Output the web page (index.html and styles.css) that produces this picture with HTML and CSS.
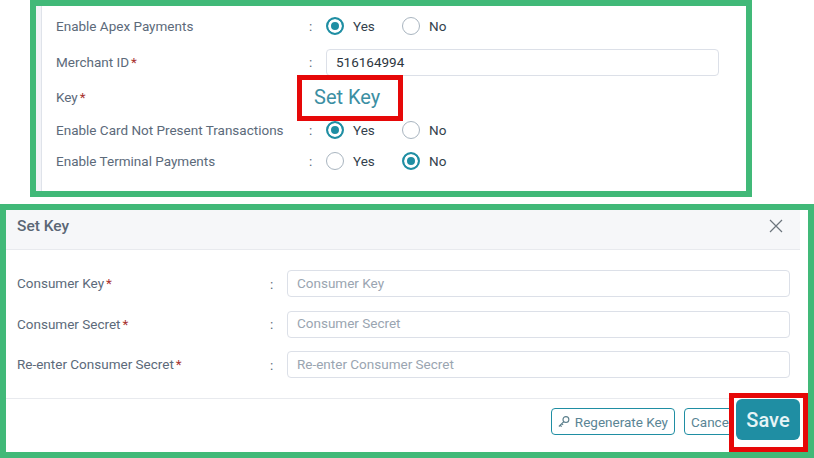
FILE: index.html
```html
<!DOCTYPE html>
<html lang="en">
<head>
    <meta charset="UTF-8">
    <title>Apex Payments Settings</title>
    <link rel="stylesheet" href="styles.css">
</head>
<body>
    <section class="settings-panel">
        <div class="settings-inner">
            <div class="row row-apex">
                <div class="row-label">Enable Apex Payments</div>
                <div class="row-colon">:</div>
                <div class="radio-group">
                    <span class="radio checked"></span><span class="radio-text">Yes</span>
                    <span class="radio"></span><span class="radio-text">No</span>
                </div>
            </div>
            <div class="row row-merchant">
                <div class="row-label">Merchant ID<span class="req">*</span></div>
                <div class="row-colon">:</div>
                <input class="text-input merchant-input" type="text" value="516164994">
            </div>
            <div class="row row-key">
                <div class="row-label">Key<span class="req">*</span></div>
            </div>
            <div class="row row-card">
                <div class="row-label">Enable Card Not Present Transactions</div>
                <div class="row-colon">:</div>
                <div class="radio-group">
                    <span class="radio checked"></span><span class="radio-text">Yes</span>
                    <span class="radio"></span><span class="radio-text">No</span>
                </div>
            </div>
            <div class="row row-terminal">
                <div class="row-label">Enable Terminal Payments</div>
                <div class="row-colon">:</div>
                <div class="radio-group">
                    <span class="radio"></span><span class="radio-text">Yes</span>
                    <span class="radio checked"></span><span class="radio-text">No</span>
                </div>
            </div>
        </div>
        <div class="callout callout-key"><a class="set-key-link">Set Key</a></div>
    </section>

    <section class="modal-panel">
        <div class="modal-header">
            <h2>Set Key</h2>
            <svg class="close-icon" width="14" height="14" viewBox="0 0 14 14">
                <path d="M1 1 L13 13 M13 1 L1 13" stroke="#6c757d" stroke-width="1.2" fill="none"/>
            </svg>
        </div>
        <div class="modal-body">
            <div class="modal-row">
                <div class="modal-label">Consumer Key<span class="req">*</span></div>
                <div class="modal-colon">:</div>
                <input class="text-input modal-input" type="text" placeholder="Consumer Key">
            </div>
            <div class="modal-row">
                <div class="modal-label">Consumer Secret<span class="req">*</span></div>
                <div class="modal-colon">:</div>
                <input class="text-input modal-input" type="text" placeholder="Consumer Secret">
            </div>
            <div class="modal-row">
                <div class="modal-label">Re-enter Consumer Secret<span class="req">*</span></div>
                <div class="modal-colon">:</div>
                <input class="text-input modal-input" type="text" placeholder="Re-enter Consumer Secret">
            </div>
        </div>
        <div class="modal-footer">
            <button class="btn-outline btn-regen">
                <svg width="13" height="13" viewBox="0 0 13 13">
                    <circle cx="8.7" cy="4.3" r="3.2" stroke="#5c7f8c" stroke-width="1.3" fill="none"/>
                    <path d="M6.4 6.6 L1 12 M2.4 10.6 L4 12.2 M4.2 8.8 L5.6 10.2" stroke="#5c7f8c" stroke-width="1.3" fill="none"/>
                </svg>
                Regenerate Key
            </button>
            <button class="btn-outline btn-cancel">Cancel</button>
        </div>
        <div class="callout callout-save"><button class="btn-save">Save</button></div>
    </section>
</body>
</html>
```

FILE: styles.css
```css
* {
    box-sizing: border-box;
}

body {
    margin: 0;
    width: 814px;
    height: 458px;
    overflow: hidden;
    background: #fff;
    font-family: Roboto, "Liberation Sans", sans-serif;
    font-size: 13.5px;
    color: #5c6a7a;
}

.settings-panel {
    position: relative;
    width: 722px;
    height: 197px;
    margin-left: 30px;
    border: 6px solid #41b978;
    background: #fff;
}

.settings-inner {
    height: 100%;
    margin-left: 5px;
    padding-left: 14px;
    border-left: 1px solid #dfe3ea;
    box-shadow: -5px 0 0 #f3f4f8;
}

.row {
    display: flex;
    align-items: center;
}

.row-apex {
    height: 40px;
}

.row-merchant {
    height: 32px;
}

.row-key {
    height: 38px;
}

.row-card {
    height: 28px;
}

.row-terminal {
    height: 34px;
}

.row-label {
    width: 253px;
}

.row-colon {
    width: 17px;
}

.req {
    margin-left: 2px;
    color: #a8322f;
}

.radio-group {
    display: flex;
    align-items: center;
}

.radio {
    width: 18px;
    height: 18px;
    border: 1px solid #a9b5c0;
    border-radius: 50%;
    background: #fff;
}

.radio.checked {
    border: 2px solid #1f8ea3;
    background: #1f8ea3;
    box-shadow: inset 0 0 0 3px #fff;
}

.radio-text {
    width: 49px;
    margin-left: 9px;
    color: #333f4d;
}

.text-input {
    height: 27px;
    padding: 0 9px;
    border: 1px solid #dce0e8;
    border-radius: 4px;
    background: #fff;
    font-family: inherit;
    font-size: 13.5px;
    color: #2c3640;
    outline: none;
}

.text-input::placeholder {
    color: #9aa5b1;
}

.merchant-input {
    width: 393px;
}

.callout {
    position: absolute;
    border: 5px solid #e60808;
}

.callout-key {
    left: 261px;
    top: 69px;
    width: 106px;
    height: 46px;
    padding-left: 12px;
    background: #fff;
}

.set-key-link {
    font-size: 20px;
    line-height: 34px;
    color: #3c8fa3;
}

.modal-panel {
    position: relative;
    height: 254px;
    margin-top: 7px;
    border: 6px solid #41b978;
    background: #fff;
}

.modal-header {
    display: flex;
    align-items: center;
    justify-content: space-between;
    width: 794px;
    height: 40px;
    padding: 0 17px 0 11px;
    border-bottom: 1px solid #e8eaee;
    background: #f6f7f9;
}

.modal-header h2 {
    margin: -8px 0 0;
    font-size: 15.5px;
    font-weight: 500;
    color: #5a6675;
}

.close-icon {
    display: block;
    margin-top: -8px;
}

.modal-body {
    height: 149px;
    padding: 20px 12px 0 11px;
    border-bottom: 1px solid #e8eaee;
}

.modal-row {
    display: flex;
    align-items: center;
    height: 27px;
    margin-bottom: 13.5px;
}

.modal-label {
    width: 253px;
    padding-bottom: 1px;
}

.modal-colon {
    width: 17px;
}

.modal-input {
    width: 503px;
    padding-bottom: 2px;
}

.modal-footer {
    display: flex;
    gap: 9px;
    padding: 9px 0 0 545px;
}

.btn-outline {
    display: flex;
    align-items: center;
    height: 27px;
    padding: 0 6px;
    border: 1px solid #1f8ea3;
    border-radius: 4px;
    background: #fff;
    font-family: inherit;
    font-size: 13.5px;
    color: #5a8595;
    white-space: nowrap;
}

.btn-regen {
    gap: 5px;
    width: 124px;
}

.btn-cancel {
    width: 60px;
}

.callout-save {
    left: 723px;
    top: 183px;
    width: 79px;
    height: 59px;
    padding: 1px 0 0 2px;
    background: #fff;
}

.btn-save {
    width: 64px;
    height: 41px;
    border: none;
    border-radius: 6px;
    background: #1f8ea3;
    font-family: inherit;
    font-size: 20px;
    font-weight: 500;
    color: #e6f4f6;
}
```
